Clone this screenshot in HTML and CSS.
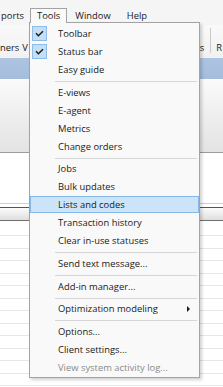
FILE: index.html
```html
<!DOCTYPE html>
<html lang="en">
<head>
<meta charset="utf-8">
<title>Tools menu</title>
<link rel="stylesheet" href="styles.css">
</head>
<body>
<div class="app">
  <div class="menubar">
    <span class="mb-item first">ports</span>
    <span class="mb-item open">Tools</span>
    <span class="mb-item">Window</span>
    <span class="mb-item">Help</span>
  </div>
  <div class="toolbar">
    <span class="tb-text first">ners</span>
    <span class="tb-text v">V</span>
    <div class="tb-right">
      <span class="tb-text">s</span>
      <span class="tb-sep"></span>
      <span class="tb-text">R</span>
    </div>
  </div>
  <div class="band"></div>
  <div class="panel"></div>
  <div class="blank"></div>
  <div class="grid">
    <div class="grid-top"></div>
    <div class="grid-head"></div>
    <div class="grid-row first"></div>
    <div class="grid-row"></div>
    <div class="grid-row"></div>
    <div class="grid-row"></div>
    <div class="grid-row"></div>
    <div class="grid-row"></div>
    <div class="grid-row"></div>
    <div class="grid-row"></div>
    <div class="grid-row"></div>
    <div class="grid-row"></div>
    <div class="grid-row"></div>
    <div class="grid-row"></div>
    <div class="grid-row"></div>
  </div>

  <div class="menu">
    <div class="mi"><span class="mi-ico"><span class="check"><svg width="9" height="7" viewBox="0 0 9 7"><path d="M1 3.3 L3.4 5.8 L8 1.2" fill="none" stroke="#1e1e1e" stroke-width="1.5"/></svg></span></span><span class="mi-label">Toolbar</span></div>
    <div class="mi"><span class="mi-ico"><span class="check"><svg width="9" height="7" viewBox="0 0 9 7"><path d="M1 3.3 L3.4 5.8 L8 1.2" fill="none" stroke="#1e1e1e" stroke-width="1.5"/></svg></span></span><span class="mi-label">Status bar</span></div>
    <div class="mi"><span class="mi-ico"></span><span class="mi-label">Easy guide</span></div>
    <div class="sep"></div>
    <div class="mi"><span class="mi-ico"></span><span class="mi-label">E-views</span></div>
    <div class="mi"><span class="mi-ico"></span><span class="mi-label">E-agent</span></div>
    <div class="mi"><span class="mi-ico"></span><span class="mi-label">Metrics</span></div>
    <div class="mi"><span class="mi-ico"></span><span class="mi-label">Change orders</span></div>
    <div class="sep"></div>
    <div class="mi"><span class="mi-ico"></span><span class="mi-label">Jobs</span></div>
    <div class="mi"><span class="mi-ico"></span><span class="mi-label">Bulk updates</span></div>
    <div class="mi hl"><span class="mi-ico"></span><span class="mi-label">Lists and codes</span></div>
    <div class="mi"><span class="mi-ico"></span><span class="mi-label">Transaction history</span></div>
    <div class="mi"><span class="mi-ico"></span><span class="mi-label">Clear in-use statuses</span></div>
    <div class="sep"></div>
    <div class="mi"><span class="mi-ico"></span><span class="mi-label">Send text message...</span></div>
    <div class="sep"></div>
    <div class="mi"><span class="mi-ico"></span><span class="mi-label">Add-in manager...</span></div>
    <div class="sep"></div>
    <div class="mi"><span class="mi-ico"></span><span class="mi-label">Optimization modeling</span><span class="arrow"></span></div>
    <div class="sep"></div>
    <div class="mi"><span class="mi-ico"></span><span class="mi-label">Options...</span></div>
    <div class="mi"><span class="mi-ico"></span><span class="mi-label">Client settings...</span></div>
    <div class="mi dis"><span class="mi-ico"></span><span class="mi-label">View system activity log...</span></div>
  </div>
</div>
</body>
</html>
```

FILE: styles.css
```css
html, body {
  margin: 0;
  padding: 0;
}

body {
  width: 223px;
  height: 387px;
  overflow: hidden;
  background: #ffffff;
  font-family: "Open Sans", "Noto Sans", sans-serif;
  font-size: 9.4px;
  color: #1a1a1a;
}

.app {
  position: relative;
  width: 223px;
  height: 387px;
  overflow: hidden;
}

/* menu bar */
.menubar {
  display: flex;
  height: 25px;
  box-sizing: border-box;
  padding-top: 8px;
  background: #f5f5f5;
  white-space: nowrap;
}

.mb-item {
  height: 14px;
  line-height: 13px;
  padding: 0 7px;
  border: 1px solid transparent;
  border-bottom: 0;
  flex: none;
}

.mb-item.first {
  padding: 0 5px 0 0;
}

.mb-item.open {
  position: relative;
  z-index: 2;
  padding: 0 6px;
  border-color: #a3a3a3;
  background: #f9f9f9;
}

/* toolbar */
.toolbar {
  display: flex;
  align-items: flex-start;
  height: 33px;
  background: linear-gradient(#f9f9f9, #f1f1f1);
  white-space: nowrap;
}

.tb-text {
  margin-top: 16px;
  line-height: 14px;
  flex: none;
}

.tb-text.v {
  margin-left: 3px;
}

.tb-right {
  display: flex;
  align-items: flex-start;
  margin-left: auto;
  padding-right: 1px;
}

.tb-sep {
  width: 1px;
  height: 25px;
  margin: 3px 5px 0 6px;
  background: #cacaca;
}

/* app body behind the menu */
.band {
  height: 21px;
  background: linear-gradient(#adc4e1, #a5bddc);
}

.panel {
  height: 73px;
  background: linear-gradient(#fafafa, #e3e3e3);
  border-bottom: 1px solid #9c9c9c;
}

.blank {
  height: 50px;
  background: #ffffff;
}

.grid-top {
  height: 3px;
  border-top: 1px solid #bfd2ea;
  border-bottom: 1px solid #555555;
  background: #ffffff;
}

.grid-head {
  height: 12px;
  background: linear-gradient(#fbfbfb, #dedede);
  border-bottom: 1px solid #6e6e6e;
}

.grid-row {
  height: 12.5px;
  box-sizing: border-box;
  border-bottom: 1px solid #e6e6e6;
}

.grid-row.first {
  height: 15px;
}

/* dropdown menu */
.menu {
  position: absolute;
  left: 29px;
  top: 22px;
  z-index: 1;
  width: 169px;
  padding: 1px 0;
  display: flex;
  flex-direction: column;
  background: #f9f9f9;
  border: 1px solid #a3a3a3;
  box-shadow: 2px 2px 3px rgba(0, 0, 0, 0.18);
  white-space: nowrap;
}

.mi {
  display: flex;
  align-items: center;
  flex: none;
  height: 17px;
  margin-top: 1px;
  box-sizing: border-box;
  border: 1px solid transparent;
}

.mi-ico {
  display: flex;
  align-items: center;
  width: 27px;
  height: 15px;
  flex: none;
}

.check {
  display: flex;
  align-items: center;
  justify-content: center;
  width: 15px;
  height: 15px;
  margin-left: 1px;
  box-sizing: border-box;
  background: #c4def5;
  border: 1px solid #8dbce8;
}

.check svg {
  display: block;
}

.mi-label {
  line-height: 15px;
}

.mi.hl {
  background: #cce4f7;
  border-color: #86b8e6;
}

.mi.dis {
  color: #8b8b8b;
}

.arrow {
  margin-left: auto;
  margin-right: 8px;
  width: 0;
  height: 0;
  border-left: 3px solid #1a1a1a;
  border-top: 3.5px solid transparent;
  border-bottom: 3.5px solid transparent;
}

.sep {
  flex: none;
  height: 0;
  margin: 3px 2px 0.67px 25px;
  border-top: 1px solid #d6d6d6;
}
```
